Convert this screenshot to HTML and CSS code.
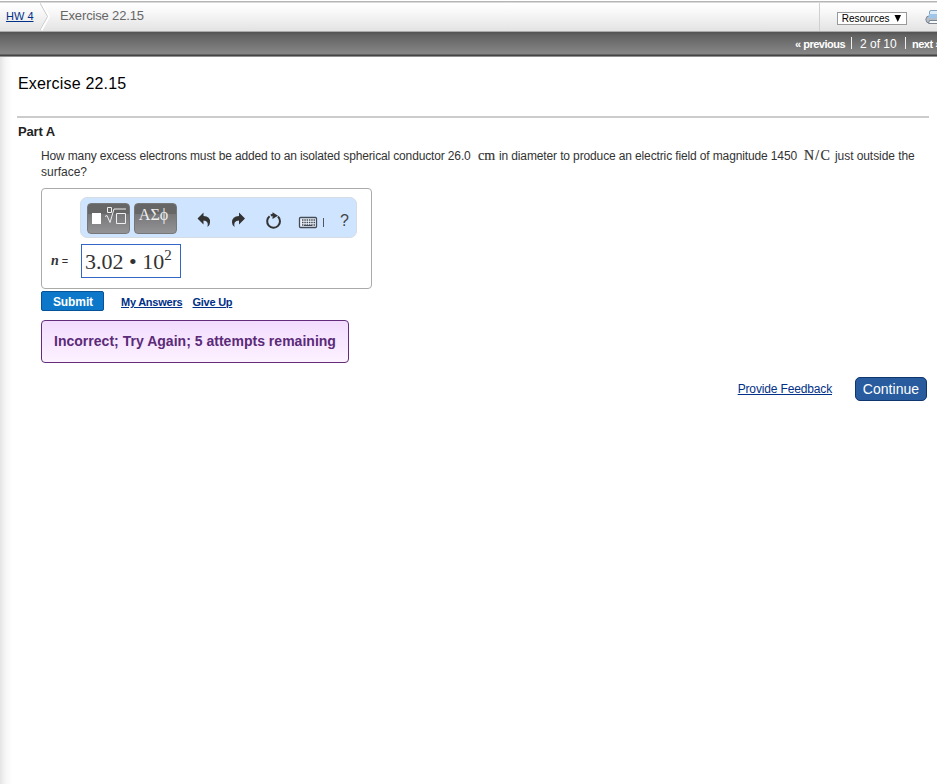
FILE: index.html
```
<!DOCTYPE html>
<html lang="en">
<head>
<meta charset="utf-8">
<title>Exercise 22.15</title>
<link rel="stylesheet" href="styles.css">
</head>
<body>
<header class="crumbs">
  <a class="crumb-link" href="#">HW 4</a>
  <svg class="chevron" width="10" height="28" viewBox="0 0 10 28"><path d="M1 0 8.500 13.500 1 27" fill="none" stroke="#fff" stroke-width="3"/><path d="M0 0 7.500 13.500 0 27" fill="none" stroke="#c8c8c8"/></svg>
  <span class="crumb-current">Exercise 22.15</span>
  <div class="tools">
    <button class="resources">Resources <svg width="8" height="7" viewBox="0 0 8 7"><path d="M0.500 0h6.500L3.750 7z" fill="#000"/></svg></button>
    <svg class="printer" width="18" height="18" viewBox="0 0 18 18"><path d="M4.500 7V4Q4.500 2.500 6 2.500H18V9H3z" fill="#dcecfb" stroke="#82a2bd"/><path d="M2 8.500h16v6H2q-2.500-3 0-6z" fill="#b5bec7" stroke="#7b8690"/><path d="M4 6h14v4H3z" fill="#9fc6ea"/><path d="M4.500 12.500h14v3h-15z" fill="#f7f9fb" stroke="#7b8690"/></svg>
  </div>
</header>
<nav class="pager">
  <a class="prev">« previous</a><i></i><span class="count">2 of 10</span><i></i><a class="next">next »</a>
</nav>
<main>
  <h1>Exercise 22.15</h1>
  <h2>Part A</h2>
  <section class="part">
    <p class="question"><span class="q1">How many excess electrons must be added to an isolated spherical conductor 26.0</span><span class="unit cm">cm</span><span class="q2">in diameter to produce an electric field of magnitude 1450</span><span class="unit nc">N/C</span><span class="q3">just outside the</span><br>surface?</p>
    <div class="answer">
      <div class="toolbar">
        <button class="key"><svg width="43" height="30" viewBox="0 0 43 30"><path d="M5 9h9v11H5z" fill="#fff"/><g fill="none" stroke="#eee"><path d="M20.500 3.500h4v5h-4zM18 12.500l2-1 3 7 4-13.500h12M29.500 9.500h9v10h-9z"/></g></svg></button>
        <button class="key greek">ΑΣϕ</button>
        <svg class="icons" width="171" height="40" viewBox="0 0 171 40">
          <g fill="#333"><path d="M12.500 21.500 18.500 15.500V19q7 0 6.500 6.500 0 3-2.500 4.500 1.500-6.500-4-6.500v4z"/><path d="M60 21.500 54 15.500V19q-7 0-7 6.500 0 3 2.500 4.500-1.500-6.500 4.500-6.500v4z"/><path d="M87.500 15.200l5.500 3.500-5.500 3.300z"/></g>
          <path d="M92.900 19.600a6.400 6.400 0 1 1-8.300-.3M85.800 18.500q1.500-.8 3-.6" fill="none" stroke="#333" stroke-width="2"/>
          <rect x="114.500" y="20.500" width="17" height="10" rx="1" fill="#eef4fb" stroke="#434b59" stroke-width="1.300"/>
          <path d="M117 23h13M117 25.500h13M117 28h13" stroke="#434b59" stroke-width="1.400" stroke-dasharray="1.500 .8"/>
          <path d="M119 28.500h8" stroke="#434b59"/>
          <path d="M138.500 21v9" stroke="#555"/>
        </svg>
        <span class="help">?</span>
      </div>
      <div class="entry"><label><em>n</em> =</label><div class="field">3.02 • 10<sup>2</sup></div></div>
    </div>
    <div class="actions"><button class="submit">Submit</button><a class="mine" href="#">My Answers</a><a class="give" href="#">Give Up</a></div>
    <div class="feedback"><span>Incorrect; Try Again; 5 attempts remaining</span></div>
  </section>
  <footer><a href="#">Provide Feedback</a><button class="continue">Continue</button></footer>
</main>
</body>
</html>
```
FILE: styles.css
```
* { box-sizing: border-box; }
html { height: 100%; }
body {
  margin: 0;
  min-height: 100%;
  overflow: hidden;
  background: linear-gradient(90deg, #e4e4e4 0, #f5f5f5 5px, #fff 12px);
  font-family: "Liberation Sans", Arial, sans-serif;
  font-size: 12px;
  color: #333;
}
button { font-family: inherit; padding: 0; border: 0; }
a { color: #003087; }
.crumbs {
  display: flex;
  height: 32px;
  padding-top: 3px;
  border-bottom: 1px solid #ababab;
  background: linear-gradient(#fff 0 1px, #b5b5b5 1px 2px, #fff 3px, #f8f8f8 12px, #e3e3e3);
}
.crumb-link { width: 40px; padding: 7px 0 0 6px; font-size: 11px; line-height: 13px; white-space: nowrap; }
.crumb-current { margin: 4px 0 0 10px; font-size: 13px; line-height: 17px; color: #666; letter-spacing: -.15px; }
.tools { display: flex; width: 118px; margin: 0 0 0 auto; border-left: 1px solid #d0d0d0; }
.resources {
  flex: none;
  width: 70px;
  height: 13px;
  margin: 9px 0 0 17px;
  border: 1px solid #999;
  background: #fff;
  font-size: 10px;
  line-height: 11px;
  letter-spacing: 0;
  color: #000;
  white-space: nowrap;
}
.resources svg { margin-left: 2px; }
.printer { flex: none; margin: 5px 0 0 18px; }
.pager {
  display: flex;
  height: 25px;
  overflow: hidden;
  padding: 5px 0 0 795px;
  background: linear-gradient(#555 0 1px, #616161 3px, #858585 21px, #858585 22px, #444 23px, #444 24px, #ddd 25px);
  color: #fff;
  font-weight: bold;
  font-size: 11px;
  line-height: 14px;
  white-space: nowrap;
}
.pager > * { flex: none; }
.pager i { width: 1px; height: 12px; background: #eee; }
.pager a { color: #fff; letter-spacing: -.5px; }
.prev { width: 56px; }
.count { width: 53px; padding-left: 8px; font-size: 12px; font-weight: normal; }
.next { padding-left: 6px; }
main { padding: 17px 8px 0 17px; }
h1 { height: 44px; margin: 0; padding-left: 1px; font-size: 16px; line-height: 20px; font-weight: normal; color: #000; letter-spacing: .18px; border-bottom: 2px solid #ccc; }
h2 { margin: 5px 0 0; font-size: 13px; line-height: 17px; color: #222; padding-left: 1px; letter-spacing: -.15px; }
.part { margin-left: 24px; }
.question { margin: 8px 0 0; line-height: 16px; white-space: nowrap; }
.question span { display: inline-block; height: 16px; vertical-align: top; }
.question .unit { font-family: "Liberation Serif", serif; font-size: 14px; -webkit-text-stroke: .2px; }
.question .q1 { width: 437px; letter-spacing: -.143px; }
.question .cm { width: 21px; letter-spacing: .1px; }
.question .q2 { width: 305px; letter-spacing: -.13px; }
.question .nc { width: 31px; letter-spacing: 1.2px; }
.question .q3 { letter-spacing: -.07px; }
.answer { width: 331px; height: 101px; margin-top: 8px; padding: 8px 0 0 9px; border: 1px solid #aaa; border-radius: 4px; background: #fff; }
.toolbar { display: flex; width: 277px; height: 41px; margin-left: 29px; padding: 5px 0 0 6px; border: 1px solid #d5dce4; border-radius: 7px; background: #cfe5ff; }
.key { flex: none; width: 43px; height: 31px; margin-right: 4px; border: 1px solid #777; border-radius: 4px; background: linear-gradient(#666 0 10px, #77777a 10px, #939396); overflow: hidden; }
.key svg { display: block; margin-left: -1px; }
.greek { padding: 0 4px 7px 0; color: #eee; font: 16px "Liberation Serif", serif; }
.icons { flex: none; margin: -6px 0 0 4px; }
.help { margin: 9px 0 0 -16px; font-size: 16px; line-height: 18px; color: #444; }
.entry { display: flex; margin-top: 6px; }
label { width: 30px; padding-top: 9px; font-size: 11px; line-height: 16px; white-space: nowrap; }
label em { font: italic bold 14px "Liberation Serif", serif; }
.field { width: 100px; height: 34px; padding-left: 3px; border: 1px solid #3267c8; font: 22px/34px "Liberation Serif", serif; white-space: nowrap; }
.field sup { position: relative; top: -9px; font-size: 15px; line-height: 0; vertical-align: baseline; }
.actions { display: flex; height: 20px; margin-top: 2px; font-size: 11px; line-height: 22px; font-weight: bold; letter-spacing: -.25px; }
.submit { width: 63px; height: 20px; margin-right: 17px; padding: 1px 0 0 1px; border: 1px solid #07539a; border-radius: 2px; background: #0d78c9; color: #fff; font-size: 12px; font-weight: bold; letter-spacing: -.1px; }
.mine { width: 71px; white-space: nowrap; }
.give { padding-left: .5px; }
.feedback { width: 308px; height: 43px; margin-top: 9px; padding-left: 12px; border: 1px solid #642d7c; border-radius: 4px; background: linear-gradient(#f2dcff, #fdf2ff); color: #5b2a78; font-size: 14px; line-height: 41px; font-weight: bold; white-space: nowrap; letter-spacing: .02px; }
footer { display: flex; height: 24px; justify-content: flex-end; margin: 14px 2px 0 0; line-height: 24px; }
footer a { letter-spacing: -.15px; }
.continue { width: 72px; height: 24px; margin-left: 23px; border: 1px solid #10366e; border-radius: 5px; background: #295c9e; color: #fff; font-size: 14px; letter-spacing: .05px; }
```
